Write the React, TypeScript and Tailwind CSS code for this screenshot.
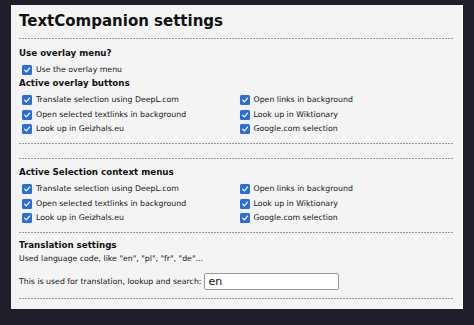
import React from 'react';

const font = { fontFamily: '"DejaVu Sans", Verdana, sans-serif' };

const Check: React.FC<{ label: string }> = ({ label }) => (
  <div className="flex items-center h-[14.5px]">
    <span className="ml-[3px] mr-[4px] w-[10px] h-[10px] rounded-[1.5px] bg-[#2a6edb] flex items-center justify-center">
      <svg viewBox="0 0 10 10" className="w-[8px] h-[8px]">
        <path d="M2 5.2 L4.2 7.3 L8.2 2.6" fill="none" stroke="white" strokeWidth="1.6" strokeLinecap="round" strokeLinejoin="round" />
      </svg>
    </span>
    <span className="text-[7.8px] text-[#15141a] leading-none whitespace-nowrap">{label}</span>
  </div>
);

const Dashed: React.FC<{ className?: string }> = ({ className = '' }) => (
  <div className={`h-px bg-[repeating-linear-gradient(90deg,#9c9c9c_0_2px,transparent_2px_3px)] ${className}`} />
);

const Heading: React.FC<{ children: React.ReactNode; className?: string }> = ({ children, className = '' }) => (
  <div className={`h-[14px] flex items-center text-[8.7px] font-bold text-[#111] leading-none ${className}`}>{children}</div>
);

const buttons = [
  'Translate selection using DeepL.com',
  'Open links in background',
  'Open selected textlinks in background',
  'Look up in Wiktionary',
  'Look up in Geizhals.eu',
  'Google.com selection',
];

const App: React.FC = () => {
  return (
    <div className="w-[474px] h-[325px] bg-[#1f1e29] pt-[5px] pl-[11px] overflow-hidden" style={font}>
      <div className="w-[452px] bg-[#f4f4f4] border-r border-white px-[8px] pb-[10px]">
        <div className="h-[33px] flex items-center text-[15px] font-bold text-[#111] leading-none">
          TextCompanion settings
        </div>
        <Dashed />

        <Heading className="mt-[7px]">Use overlay menu?</Heading>
        <div className="mt-[2.75px]">
          <Check label="Use the overlay menu" />
        </div>
        <Heading className="mt-[-1.25px]">Active overlay buttons</Heading>
        <div className="grid grid-cols-2 mt-[2.75px]">
          {buttons.map(b => (
            <Check key={b} label={b} />
          ))}
        </div>
        <Dashed className="mt-[6.75px]" />
        <Dashed className="mt-[14px]" />

        <Heading className="mt-[6px]">Active Selection context menus</Heading>
        <div className="grid grid-cols-2 mt-[2.75px]">
          {buttons.map(b => (
            <Check key={b} label={b} />
          ))}
        </div>
        <Dashed className="mt-[6.75px]" />

        <Heading className="mt-[5px]">Translation settings</Heading>
        <div className="h-[14px] flex items-center text-[7.8px] text-[#15141a] leading-none">
          Used language code, like "en", "pl", "fr", "de"...
        </div>
        <div className="mt-[7px] flex items-center h-[17px]">
          <span className="text-[7.8px] text-[#15141a] leading-none mr-[3px]">
            This is used for translation, lookup and search:
          </span>
          <input
            defaultValue="en"
            className="w-[135px] h-[17px] bg-white border border-[#9a9a9a] rounded-[2px] px-[3px] text-[11px] text-[#111] outline-none"
            style={font}
          />
        </div>
        <Dashed className="mt-[8px]" />
      </div>
    </div>
  );
};

export default App;
